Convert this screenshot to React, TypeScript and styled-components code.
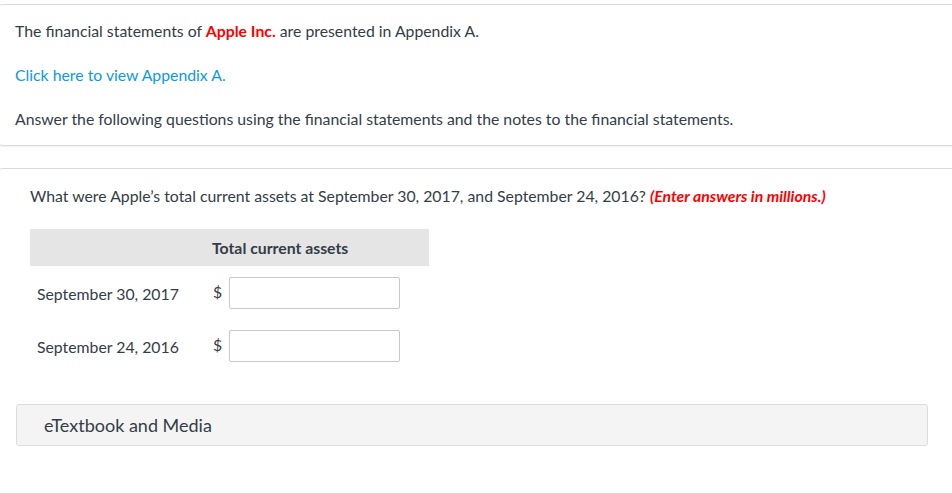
import styled, { createGlobalStyle } from "styled-components";

const GlobalStyle = createGlobalStyle`
  html, body {
    margin: 0;
    padding: 0;
    background: #fff;
    overflow: hidden;
  }
  body {
    font-family: Lato, "Liberation Sans", sans-serif;
    color: #333d47;
  }
`;

const Page = styled.div`
  width: 962px;
  margin-left: -2px;
  padding-top: 4px;
  display: flex;
  flex-direction: column;
  gap: 22px;
`;

const Card = styled.section<{ $pad: string; $height?: number }>`
  box-sizing: border-box;
  border: 1px solid #dcdcdc;
  border-radius: 4px;
  box-shadow: 0 1px 1px rgba(0, 0, 0, 0.05);
  padding: ${(p) => p.$pad};
  height: ${(p) => (p.$height ? `${p.$height}px` : "auto")};
`;

const Para = styled.p`
  margin: 0;
  font-size: 15.8px;
  line-height: 20px;
  & + & {
    margin-top: 24px;
  }
`;

const Strong = styled.span<{ $italic?: boolean }>`
  color: #f00;
  font-weight: 700;
  font-style: ${(p) => (p.$italic ? "italic" : "normal")};
`;

const Link = styled.a`
  color: #0b9ae6;
  text-decoration: none;
  cursor: pointer;
`;

const Table = styled.table`
  margin-top: 23px;
  border-collapse: collapse;
  width: 399px;
  font-size: 15.8px;
`;

const HeadRow = styled.tr`
  background: #e5e5e5;
  height: 37px;
`;

const HeadCell = styled.th`
  text-align: left;
  font-weight: 700;
  padding: 0 0 0 6px;
`;

const Row = styled.tr<{ $top: number }>`
  & > td {
    padding-top: ${(p) => p.$top}px;
  }
`;

const Label = styled.td`
  width: 168px;
  padding-left: 7px;
  vertical-align: middle;
`;

const Dollar = styled.td`
  width: 15px;
  padding-left: 7px;
  vertical-align: middle;
  position: relative;
  top: -2px;
`;

const InputCell = styled.td`
  padding-left: 0;
`;

const Box = styled.input`
  box-sizing: border-box;
  display: block;
  width: 171px;
  height: 32px;
  border: 1px solid #c9c9c9;
  border-radius: 2px;
  font: inherit;
  padding: 0 6px;
`;

const Media = styled.div`
  margin: 41px 0 0 -14px;
  box-sizing: border-box;
  width: 912px;
  height: 42px;
  background: #f4f4f4;
  border: 1px solid #dcdcdc;
  border-radius: 3px;
  display: flex;
  align-items: center;
  padding-left: 27px;
  font-size: 18px;
  color: #333d47;
`;

const rows = [
  { label: "September 30, 2017", top: 11 },
  { label: "September 24, 2016", top: 20 },
];

export default function App() {
  return (
    <>
      <GlobalStyle />
      <Page>
        <Card $pad="16px 16px 0" $height={142}>
          <Para>
            The financial statements of <Strong>Apple Inc.</Strong> are
            presented in Appendix A.
          </Para>
          <Para>
            <Link>Click here to view Appendix A.</Link>
          </Para>
          <Para>
            Answer the following questions using the financial statements and
            the notes to the financial statements.
          </Para>
        </Card>
        <Card $pad="17px 31px 0" $height={360}>
          <Para>
            What were Apple’s total current assets at September 30, 2017, and
            September 24, 2016?{" "}
            <Strong $italic>(Enter answers in millions.)</Strong>
          </Para>
          <Table>
            <thead>
              <HeadRow>
                <th />
                <HeadCell colSpan={2}>Total current assets</HeadCell>
              </HeadRow>
            </thead>
            <tbody>
              {rows.map((r) => (
                <Row key={r.label} $top={r.top}>
                  <Label>{r.label}</Label>
                  <Dollar>$</Dollar>
                  <InputCell>
                    <Box type="text" />
                  </InputCell>
                </Row>
              ))}
            </tbody>
          </Table>
          <Media>eTextbook and Media</Media>
        </Card>
      </Page>
    </>
  );
}
